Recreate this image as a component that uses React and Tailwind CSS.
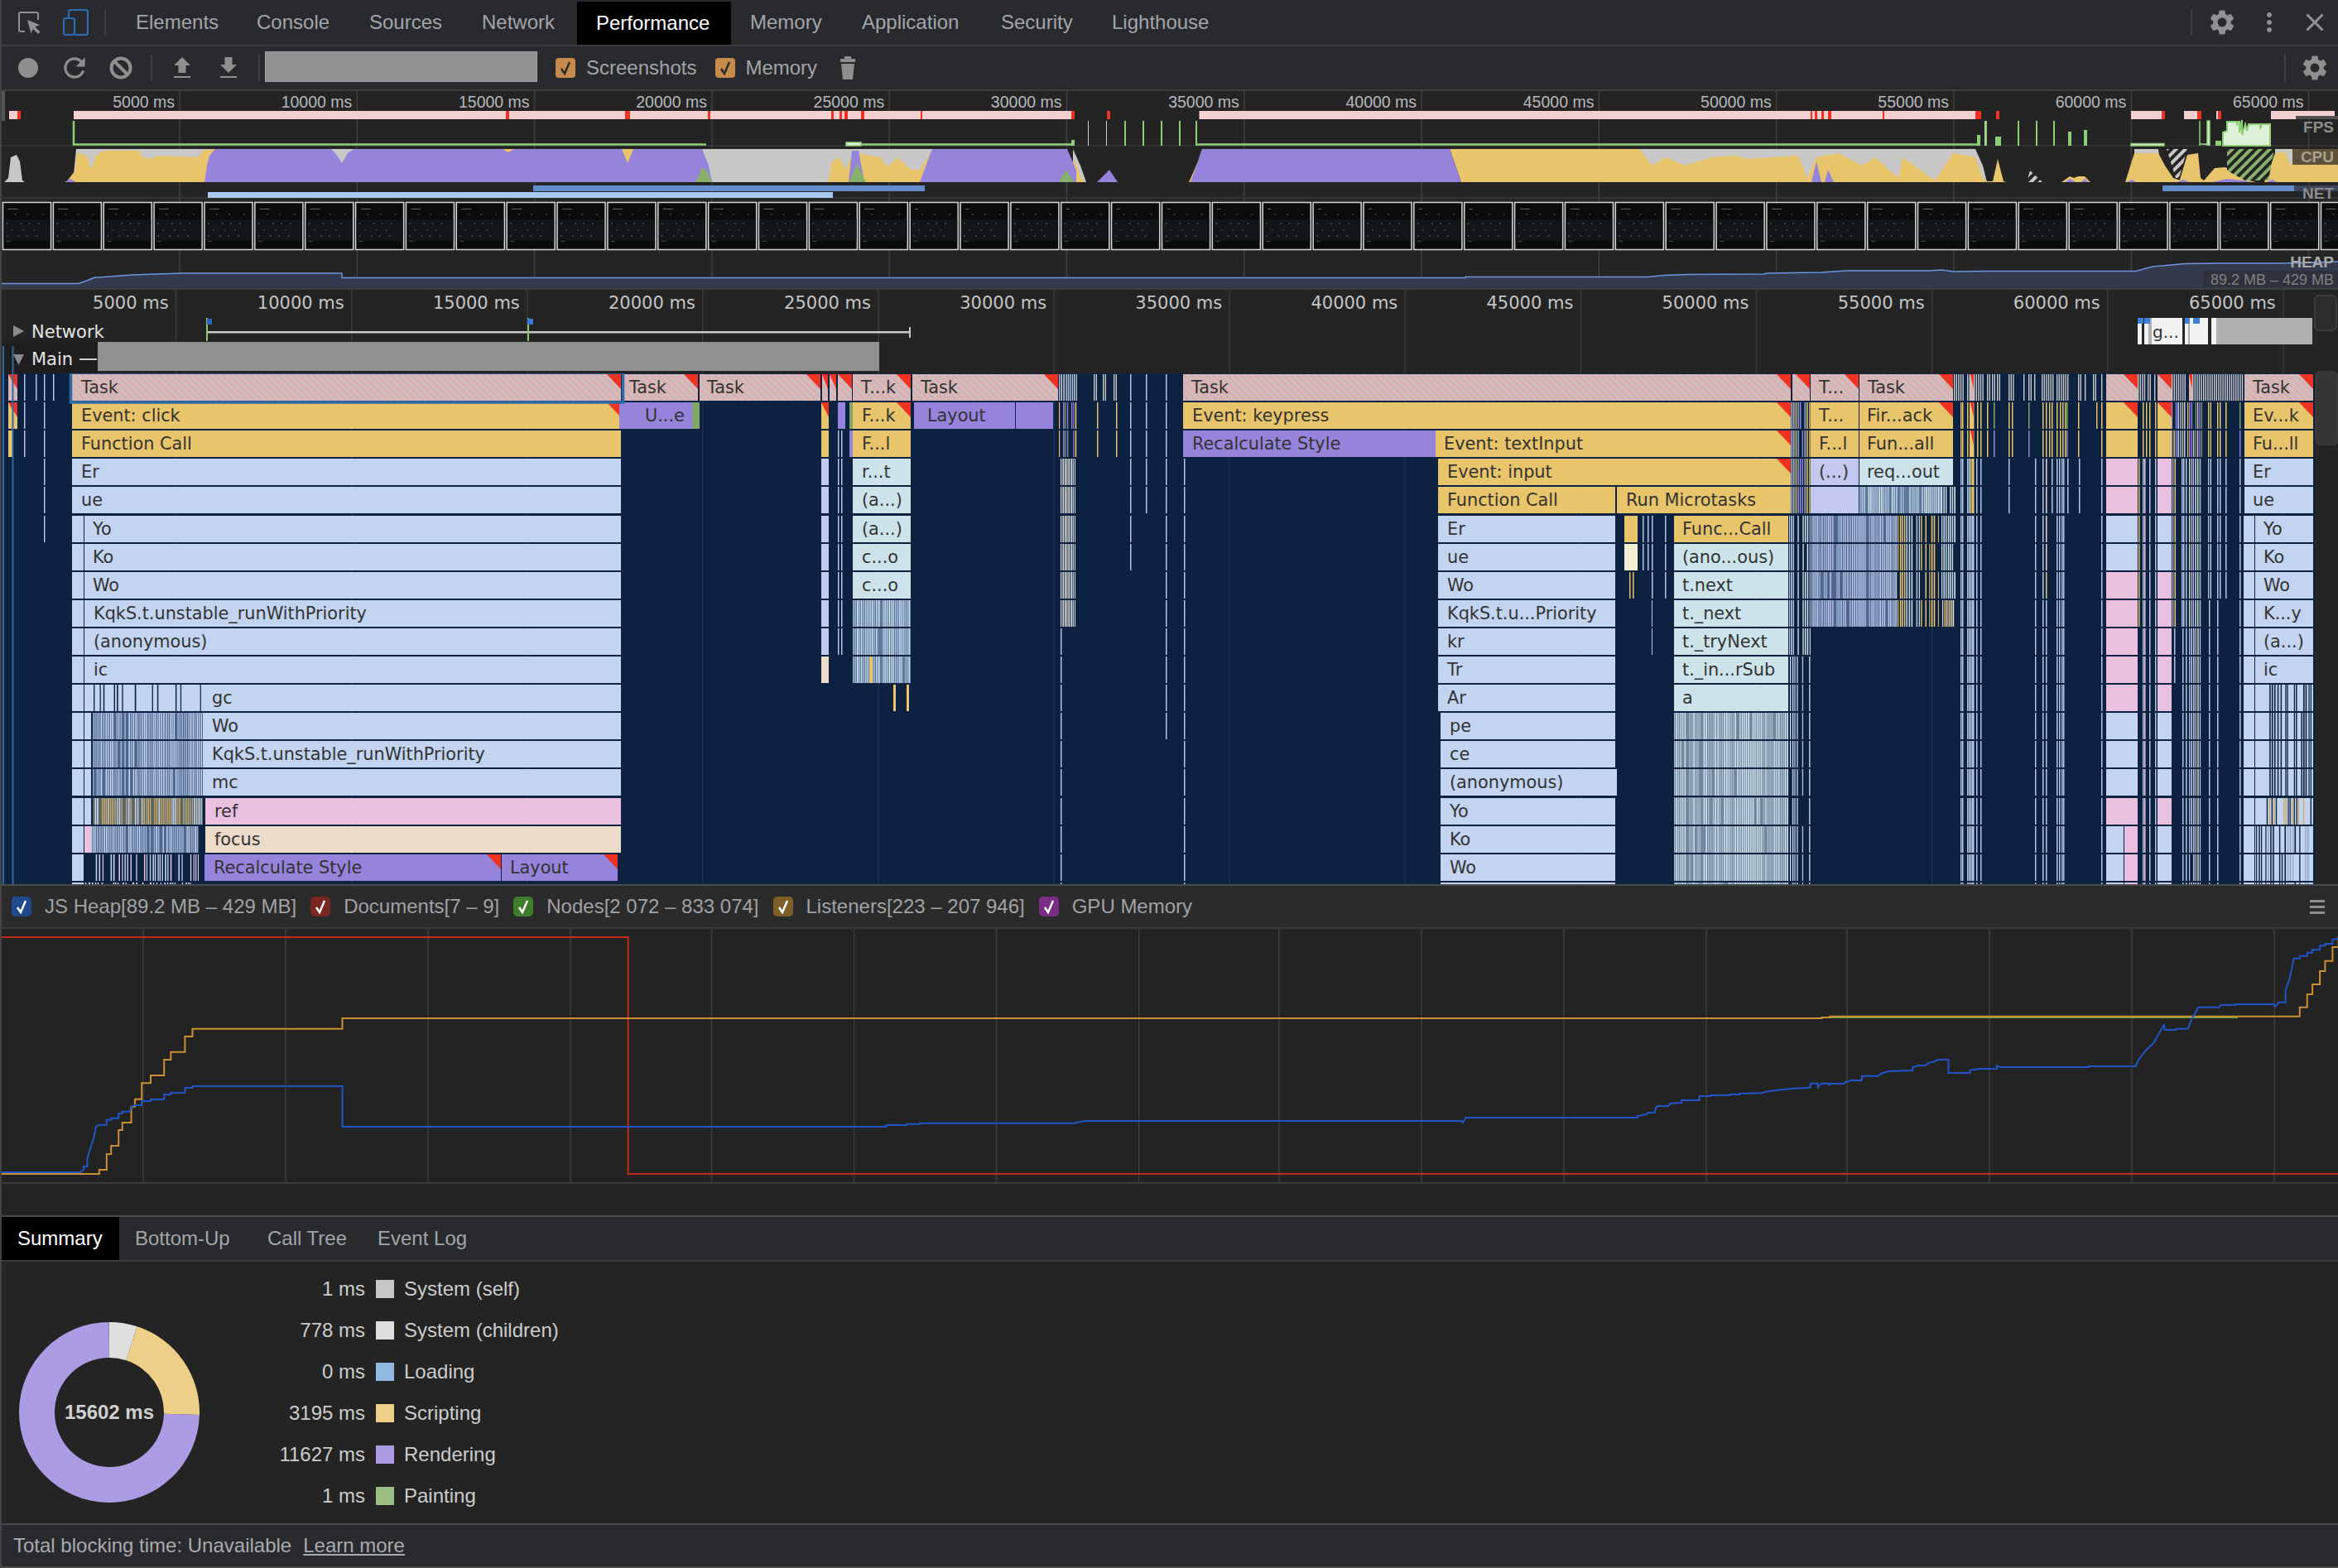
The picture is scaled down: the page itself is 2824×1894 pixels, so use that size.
import React from 'react';
import { MdSettings, MdMoreVert, MdClose, MdRefresh } from 'react-icons/md';

const NAVY = '#0d2140';
const BLUE = '#c2d4ef';
const TEAL = '#cce3ea';
const YEL = '#e8c46a';
const PUR = '#9683dc';
const PINK = '#e9c1df';
const BEIGE = '#ebdbc8';
const LAV = '#c3c8ef';
const GREY = '#c8c8c8';
const LINE = '#b4c6e4';
const GRN = '#7fa86a';

const rowY = (k) => 452 + Math.round(34.1 * k);

const rng = (seed) => {
  let s = seed;
  return () => {
    s = (s * 16807) % 2147483647;
    return (s - 1) / 2147483646;
  };
};

// thin vertical slices, the way the flame chart draws tiny events
function stripes(x0, x1, r0, r1, seed, colors, fill = 0.9, maxGap = 0.6) {
  const r = rng(seed);
  const out = [];
  let x = x0;
  while (x < x1) {
    const w = 1.2 + r() * 0.5;
    if (r() < fill) {
      const c = colors[Math.floor(r() * colors.length)];
      for (let k = r0; k <= r1; k++) {
        if (r() < 0.96) out.push({ x, w: Math.min(w, x1 - x), y: rowY(k), c });
      }
    }
    x += w + 0.8 + r() * maxGap;
  }
  return out;
}

// the same column of one pixel lines repeated through a span of rows
function cols(xs, r0, r1, c, w = 1.5) {
  const out = [];
  xs.forEach((x) => {
    for (let k = r0; k <= r1; k++) out.push({ x, w, y: rowY(k), c });
  });
  return out;
}

const tight = (ranges, r0, r1, c) => {
  const xs = [];
  ranges.forEach(([a, b]) => {
    for (let x = a; x < b; x += 2.6) xs.push(x);
  });
  return cols(xs, r0, r1, c, 1.4);
};

// muted colour under the densest groups of slices: x0, x1, first row, last row, colour
const backs = [
  [112, 245, 12, 14, '#4f678e'],
  [112, 245, 15, 15, '#5f6660'],
  [110, 240, 16, 16, '#4f678e'],
  [1030, 1100, 8, 10, '#5f7a98'],
  [2022, 2160, 12, 18, '#6f879f'],
  [2188, 2290, 5, 8, '#4f678e'],
  [2246, 2345, 4, 4, '#5f7a98'],
];

const slices = [
  // under Event: click
  ...stripes(102, 245, 11, 11, 11, [NAVY], 0.35, 4),
  ...stripes(112, 245, 12, 14, 12, ['#9fb4d4', BLUE], 0.95),
  ...stripes(112, 245, 15, 15, 13, ['#a9a38f', '#c9a86a', BLUE], 0.95),
  ...stripes(110, 240, 16, 16, 14, ['#9fb4d4', BLUE], 0.95),
  ...stripes(110, 240, 17, 17, 15, [BLUE, BLUE, PINK], 0.75, 2),
  ...stripes(88, 235, 18, 18, 16, [BLUE, '#ffffff'], 0.6, 3),
  ...stripes(1030, 1100, 8, 10, 17, [BLUE, TEAL, '#9fb4d4'], 0.95),
  ...cols([1012, 1016], 1, 9, LINE),

  // after the Layout task
  ...stripes(1279, 1301, 0, 0, 18, [GREY, LINE], 0.95),
  ...stripes(1279, 1301, 1, 2, 19, [GRN, YEL, PUR], 0.8),
  ...stripes(1281, 1299, 3, 8, 20, [TEAL, BEIGE, '#ffffff'], 0.95),
  ...cols([1281], 9, 18, LINE),
  ...tight([[1321, 1326], [1332, 1336], [1345, 1348]], 0, 0, GREY),
  ...cols([1325, 1348], 1, 2, YEL),
  ...cols([1365], 0, 6, LINE),
  ...cols([1384], 0, 4, LINE),
  ...cols([1408], 0, 12, LINE),
  ...cols([1430], 3, 18, LINE),
  ...cols([29], 0, 2, LINE),
  ...cols([43, 64], 0, 0, LINE),
  ...cols([53], 0, 5, LINE),

  // between the two function calls of keypress
  ...cols([1995, 2011], 5, 7, LINE),
  ...cols([1984, 1990], 5, 6, LINE),
  ...cols([1968, 1972], 7, 7, YEL),
  ...cols([1995], 8, 9, LINE, 1),
  ...stripes(2022, 2160, 12, 18, 22, [TEAL, '#a6bcc8', TEAL], 0.95),
  ...stripes(2161, 2187, 1, 4, 23, [YEL, PUR, LINE], 0.7, 1),
  ...stripes(2161, 2187, 5, 9, 24, [LINE, TEAL, YEL], 0.8, 1),
  ...stripes(2162, 2187, 10, 18, 25, [LINE, TEAL], 0.8, 1),
  ...stripes(2246, 2345, 4, 4, 26, [TEAL, LINE, LINE], 0.95),
  ...stripes(2188, 2290, 5, 8, 27, [LAV, LINE, '#9fb4d4'], 0.95),
  ...stripes(2290, 2342, 5, 8, 28, [LINE, TEAL, YEL, '#c9a86a'], 0.8, 1),
  ...stripes(2345, 2363, 4, 7, 29, [TEAL], 1),
  ...stripes(2346, 2361, 8, 8, 30, [YEL, BEIGE], 1),

  // sparse region after Fir...ack
  ...tight([[2360, 2372], [2376, 2379], [2384, 2395], [2400, 2403], [2406, 2409], [2412, 2415], [2426, 2433], [2444, 2445], [2450, 2453], [2457, 2458], [2466, 2479], [2484, 2499], [2510, 2513], [2518, 2519], [2528, 2533], [2538, 2539]], 0, 0, GREY),
  ...cols([2368, 2370, 2376, 2379, 2383, 2388, 2392, 2400, 2426, 2430, 2467, 2471, 2475, 2478, 2484, 2488, 2491, 2494, 2510, 2538], 1, 2, YEL),
  ...cols([2408, 2450, 2496], 1, 1, GRN),
  ...cols([2408, 2450, 2496], 2, 2, PUR),
  ...cols([2532], 1, 1, YEL),
  ...cols([2368, 2370, 2376, 2378, 2387, 2392, 2458, 2467, 2484, 2487, 2490, 2492, 2538], 3, 18, LINE),
  ...cols([2380, 2382, 2383], 3, 4, YEL),
  ...cols([2380, 2382, 2383], 5, 18, LINE),
  ...cols([2426, 2478, 2497, 2511], 3, 4, LINE),
  ...cols([2471], 3, 6, BEIGE),
  ...cols([2471], 7, 7, YEL),
  ...cols([2471], 8, 18, LINE),

  // columns next to the pink blocks
  ...tight([[2582, 2592], [2594, 2597], [2602, 2604]], 0, 0, GREY),
  ...cols([2588, 2592, 2596, 2603], 1, 2, YEL),
  ...cols([2583], 3, 8, YEL),
  ...cols([2588, 2596, 2603], 3, 18, LINE),
  ...cols([2590], 3, 18, PINK),
  ...tight([[2623, 2640], [2648, 2710]], 0, 0, GREY),
  ...stripes(2623, 2640, 1, 2, 31, [YEL, PUR, LINE], 0.95),
  ...stripes(2642, 2660, 1, 2, 32, [YEL, PINK, PUR, GRN], 0.95),
  ...tight([[2667, 2672]], 1, 2, YEL),
  ...cols([2678, 2681, 2688], 1, 2, YEL),
  ...cols([2705], 1, 1, GRN),
  ...cols([2705], 2, 2, PUR),
  ...stripes(2624, 2629, 3, 8, 33, [YEL, LINE], 1),
  ...cols([2635, 2637, 2640], 3, 8, LINE),
  ...stripes(2644, 2659, 3, 8, 34, [LINE, PINK, '#d7ecc4', LINE], 1),
  ...stripes(2667, 2672, 3, 7, 35, [LINE, BEIGE], 1),
  ...cols([2678, 2681], 3, 7, LINE),
  ...cols([2688], 3, 7, LINE),
  ...cols([2705], 3, 18, LINE),
  ...cols([2626], 9, 10, LINE),
  ...cols([2636, 2640], 9, 18, LINE),
  ...stripes(2644, 2659, 9, 18, 36, [LINE, PINK, '#d7ecc4', LINE], 1),
  ...cols([2668, 2678], 8, 18, LINE),
];

// row, x0, x1, colour, label, text offset, red corner
const blocks = [
  [0, 10, 21, 'url(#taskHatch)', '', 0, true],
  [1, 10, 21, YEL, '', 0, true],
  [2, 10, 16, YEL, '', 0, false],
  [0, 87, 750, 'url(#taskHatch)', 'Task', 11, true],
  [0, 751, 843, 'url(#taskHatch)', 'Task', 9, true],
  [0, 845, 991, 'url(#taskHatch)', 'Task', 9, true],
  [0, 993, 1000, 'url(#taskHatch)', '', 0, true],
  [0, 1002, 1010, 'url(#taskHatch)', '', 0, true],
  [0, 1012, 1029, 'url(#taskHatch)', '', 0, true],
  [0, 1030, 1100, 'url(#taskHatch)', 'T...k', 10, true],
  [0, 1102, 1278, 'url(#taskHatch)', 'Task', 10, true],
  [0, 1429, 2163, 'url(#taskHatch)', 'Task', 10, true],
  [0, 2165, 2186, 'url(#taskHatch)', '', 0, true],
  [0, 2187, 2245, 'url(#taskHatch)', 'T...', 10, true],
  [0, 2246, 2359, 'url(#taskHatch)', 'Task', 10, true],
  [0, 2380, 2384, 'url(#taskHatch)', '', 0, true],
  [0, 2544, 2582, 'url(#taskHatch)', '', 0, true],
  [0, 2606, 2623, 'url(#taskHatch)', '', 0, true],
  [0, 2644, 2648, 'url(#taskHatch)', '', 0, true],
  [0, 2711, 2794, 'url(#taskHatch)', 'Task', 10, true],

  [1, 87, 750, YEL, 'Event: click', 11, true],
  [1, 748, 836, PUR, 'U...e', 31, false],
  [1, 836, 845, GRN, '', 0, false],
  [1, 992, 1001, YEL, '', 0, true],
  [1, 1012, 1021, PUR, '', 0, false],
  [1, 1026, 1030, GRN, '', 0, false],
  [1, 1030, 1100, YEL, 'F...k', 11, true],
  [1, 1104, 1226, PUR, 'Layout', 16, false],
  [1, 1227, 1272, PUR, '', 0, false],
  [1, 1429, 2163, YEL, 'Event: keypress', 11, true],
  [1, 2187, 2245, YEL, 'T...', 10, false],
  [1, 2246, 2359, YEL, 'Fir...ack', 9, true],
  [1, 2380, 2384, YEL, '', 0, true],
  [1, 2544, 2582, YEL, '', 0, true],
  [1, 2606, 2623, YEL, '', 0, true],
  [1, 2711, 2794, YEL, 'Ev...k', 10, true],

  [2, 87, 750, YEL, 'Function Call', 11, false],
  [2, 992, 1001, YEL, '', 0, false],
  [2, 1026, 1030, PUR, '', 0, false],
  [2, 1030, 1100, YEL, 'F...l', 11, false],
  [2, 1429, 1734, PUR, 'Recalculate Style', 11, false],
  [2, 1734, 2163, YEL, 'Event: textInput', 10, true],
  [2, 2187, 2245, YEL, 'F...l', 10, false],
  [2, 2246, 2359, YEL, 'Fun...all', 9, false],
  [2, 2380, 2384, YEL, '', 0, true],
  [2, 2544, 2582, YEL, '', 0, false],
  [2, 2606, 2623, YEL, '', 0, false],
  [2, 2711, 2794, YEL, 'Fu...ll', 10, false],

  [3, 87, 750, BLUE, 'Er', 11, false],
  [3, 992, 1001, LAV, '', 0, false],
  [3, 1030, 1100, TEAL, 'r...t', 11, false],
  [3, 1737, 2163, YEL, 'Event: input', 11, true],
  [3, 2187, 2245, LAV, '(...)', 10, false],
  [3, 2246, 2359, TEAL, 'req...out', 9, false],
  [3, 2544, 2582, PINK, '', 0, false],
  [3, 2606, 2623, PINK, '', 0, false],
  [3, 2711, 2794, BLUE, 'Er', 10, false],

  [4, 87, 750, BLUE, 'ue', 11, false],
  [4, 992, 1001, LAV, '', 0, false],
  [4, 1030, 1100, TEAL, '(a...)', 11, false],
  [4, 1737, 1951, YEL, 'Function Call', 11, false],
  [4, 1953, 2163, YEL, 'Run Microtasks', 11, false],
  [4, 2187, 2245, LAV, '', 0, false],
  [4, 2544, 2582, PINK, '', 0, false],
  [4, 2606, 2623, PINK, '', 0, false],
  [4, 2711, 2794, BLUE, 'ue', 10, false],

  [5, 102, 750, BLUE, 'Yo', 10, false],
  [5, 992, 1001, LAV, '', 0, false],
  [5, 1030, 1100, TEAL, '(a...)', 11, false],
  [5, 1737, 1951, BLUE, 'Er', 11, false],
  [5, 1962, 1978, YEL, '', 0, false],
  [5, 2022, 2160, YEL, 'Func...Call', 10, false],
  [5, 2544, 2582, BLUE, '', 0, false],
  [5, 2606, 2623, BLUE, '', 0, false],
  [5, 2724, 2794, BLUE, 'Yo', 10, false],

  [6, 102, 750, BLUE, 'Ko', 10, false],
  [6, 992, 1001, LAV, '', 0, false],
  [6, 1030, 1100, TEAL, 'c...o', 11, false],
  [6, 1737, 1951, BLUE, 'ue', 11, false],
  [6, 1962, 1978, '#f2eed2', '', 0, false],
  [6, 2022, 2160, TEAL, '(ano...ous)', 10, false],
  [6, 2544, 2582, BLUE, '', 0, false],
  [6, 2606, 2623, BLUE, '', 0, false],
  [6, 2724, 2794, BLUE, 'Ko', 10, false],

  [7, 102, 750, BLUE, 'Wo', 10, false],
  [7, 992, 1001, LAV, '', 0, false],
  [7, 1030, 1100, TEAL, 'c...o', 11, false],
  [7, 1737, 1951, BLUE, 'Wo', 11, false],
  [7, 2022, 2160, TEAL, 't.next', 10, false],
  [7, 2544, 2582, PINK, '', 0, false],
  [7, 2606, 2623, PINK, '', 0, false],
  [7, 2724, 2794, BLUE, 'Wo', 10, false],

  [8, 102, 750, BLUE, 'KqkS.t.unstable_runWithPriority', 11, false],
  [8, 992, 1001, LAV, '', 0, false],
  [8, 1737, 1951, BLUE, 'KqkS.t.u...Priority', 11, false],
  [8, 2022, 2160, TEAL, 't._next', 10, false],
  [8, 2544, 2582, PINK, '', 0, false],
  [8, 2606, 2623, PINK, '', 0, false],
  [8, 2724, 2794, BLUE, 'K...y', 10, false],

  [9, 102, 750, BLUE, '(anonymous)', 11, false],
  [9, 992, 1001, LAV, '', 0, false],
  [9, 1737, 1951, BLUE, 'kr', 11, false],
  [9, 2022, 2160, TEAL, 't._tryNext', 10, false],
  [9, 2544, 2582, PINK, '', 0, false],
  [9, 2606, 2623, PINK, '', 0, false],
  [9, 2724, 2794, BLUE, '(a...)', 10, false],

  [10, 102, 750, BLUE, 'ic', 11, false],
  [10, 992, 1001, BEIGE, '', 0, false],
  [10, 1050, 1054, YEL, '', 0, false],
  [10, 1737, 1951, BLUE, 'Tr', 11, false],
  [10, 2022, 2160, TEAL, 't._in...rSub', 10, false],
  [10, 2544, 2582, PINK, '', 0, false],
  [10, 2606, 2623, PINK, '', 0, false],
  [10, 2724, 2794, BLUE, 'ic', 10, false],

  [11, 245, 750, BLUE, 'gc', 11, false],
  [11, 1079, 1082, YEL, '', 0, false],
  [11, 1095, 1098, YEL, '', 0, false],
  [11, 1737, 1951, BLUE, 'Ar', 11, false],
  [11, 2022, 2160, TEAL, 'a', 10, false],
  [11, 2544, 2582, PINK, '', 0, false],
  [11, 2606, 2623, PINK, '', 0, false],

  [12, 245, 750, BLUE, 'Wo', 11, false],
  [12, 1740, 1951, BLUE, 'pe', 11, false],
  [12, 2544, 2582, BLUE, '', 0, false],
  [12, 2606, 2623, BLUE, '', 0, false],

  [13, 245, 750, BLUE, 'KqkS.t.unstable_runWithPriority', 11, false],
  [13, 1740, 1951, BLUE, 'ce', 11, false],
  [13, 2544, 2582, BLUE, '', 0, false],
  [13, 2606, 2623, BLUE, '', 0, false],

  [14, 245, 750, BLUE, 'mc', 11, false],
  [14, 1740, 1953, BLUE, '(anonymous)', 11, false],
  [14, 2544, 2582, BLUE, '', 0, false],
  [14, 2606, 2623, BLUE, '', 0, false],

  [15, 248, 750, PINK, 'ref', 11, false],
  [15, 1740, 1951, BLUE, 'Yo', 11, false],
  [15, 2544, 2582, PINK, '', 0, false],
  [15, 2606, 2623, PINK, '', 0, false],

  [16, 248, 750, BEIGE, 'focus', 11, false],
  [16, 1740, 1951, BLUE, 'Ko', 11, false],
  [16, 2544, 2565, BLUE, '', 0, false],
  [16, 2566, 2582, PINK, '', 0, false],
  [16, 2606, 2623, BLUE, '', 0, false],

  [17, 247, 605, PUR, 'Recalculate Style', 11, true],
  [17, 606, 746, PUR, 'Layout', 10, true],
  [17, 1740, 1951, BLUE, 'Wo', 11, false],
  [17, 2544, 2565, BLUE, '', 0, false],
  [17, 2566, 2582, PINK, '', 0, false],
  [17, 2606, 2623, BLUE, '', 0, false],

  [18, 1740, 1951, BLUE, '', 0, false],
  [18, 2544, 2565, BLUE, '', 0, false],
  [18, 2566, 2582, PINK, '', 0, false],
  [18, 2606, 2623, BLUE, '', 0, false],
];

const leftColumn = [5, 6, 7, 8, 9, 10, 11, 12, 13, 14, 15, 16, 17, 18];

// blocks drawn first so that the tiny slices land on top of them
const tailRight = [11, 12, 13, 14, 15, 16, 17, 18];
const tailSlices = [
  ...stripes(2735, 2792, 11, 14, 37, [NAVY], 0.7, 1.5),
  ...stripes(2735, 2792, 15, 15, 38, [NAVY, '#c9a86a'], 0.8, 1),
  ...stripes(2725, 2792, 16, 18, 39, [NAVY, NAVY, '#8fa5c8'], 0.7, 1.5),
];

function FlameChart() {
  const gridX = Array.from({ length: 13 }, (_, i) => 212.6 + 212.1 * i);
  const labels = Array.from({ length: 13 }, (_, i) => `${(i + 1) * 5000} ms`);
  return (
    <svg viewBox="2 350 2822 718" className="block w-[2822px] h-[718px] font-['DejaVu_Sans',sans-serif]">
      <defs>
        <pattern id="taskHatch" width="6" height="6" patternUnits="userSpaceOnUse" patternTransform="rotate(135)">
          <rect width="6" height="6" fill="#dfadab" />
          <rect width="3" height="6" fill="#cbbfc3" />
        </pattern>
        <clipPath id="flameClip">
          <rect x="0" y="451" width="2824" height="617" />
        </clipPath>
      </defs>
      <rect x="2" y="350" width="2822" height="718" fill="#242424" />
      {gridX.map((x) => (
        <line key={x} x1={x} x2={x} y1="350" y2="451" stroke="#383838" strokeWidth="1.5" />
      ))}
      {labels.map((t, i) => (
        <text key={t} x={gridX[i] - 9} y="373" textAnchor="end" fontSize="21" fill="#c4c4c4">{t}</text>
      ))}

      {/* network row */}
      <path d="M16 393l13 7-13 7z" fill="#8a8a8a" />
      <text x="38" y="408" fontSize="21" fill="#e4e4e4">Network</text>
      <rect x="251" y="400" width="849" height="2.5" fill="#c8c8c8" />
      <rect x="1098" y="395" width="2" height="13" fill="#c8c8c8" />
      <rect x="249" y="384" width="2" height="28" fill="#8cc56e" />
      <rect x="637" y="384" width="2" height="28" fill="#8cc56e" />
      <rect x="250" y="385" width="6" height="7" fill="#2f63b8" />
      <rect x="637" y="385" width="7" height="7" fill="#3a78dc" />
      <rect x="2582" y="384" width="211" height="32" fill="#b0b0b0" />
      {[[2582, 5], [2590, 5], [2599, 37], [2639, 4], [2645, 22], [2671, 6]].map(([x, w]) => (
        <rect key={x} x={x} y="384" width={w} height="32" fill="#f2f2f2" />
      ))}
      <rect x="2587" y="384" width="3" height="32" fill="#242424" />
      <rect x="2636" y="384" width="3" height="32" fill="#242424" />
      <rect x="2667" y="384" width="4" height="32" fill="#242424" />
      {[[2582, 7], [2590, 7], [2639, 6], [2649, 8]].map(([x, w]) => (
        <rect key={x} x={x} y="384" width={w} height="7" fill="#3f7fdc" />
      ))}
      <text x="2600" y="408" fontSize="20" fill="#333">g...</text>

      {/* main row */}
      <rect x="2" y="413" width="116" height="38" fill="#1e1e1e" />
      <rect x="118" y="413" width="944" height="35" fill="#909090" />
      <path d="M16 428h13l-6.5 13z" fill="#8a8a8a" />
      <text x="38" y="441" fontSize="21" fill="#e4e4e4">Main</text>
      <rect x="96" y="433" width="21" height="2" fill="#d0d0d0" />

      <g clipPath="url(#flameClip)">
        <rect x="2" y="451" width="2822" height="617" fill={NAVY} />
        {gridX.map((x) => (
          <line key={x} x1={x} x2={x} y1="451" y2="1068" stroke="#1d3355" strokeWidth="1.5" />
        ))}
        {leftColumn.map((k) => (
          <g key={k}>
            <rect x="87" y={rowY(k)} width="14" height="32" fill={BLUE} />
            <rect x="2710" y={rowY(k)} width="13" height="32" fill={BLUE} />
          </g>
        ))}
        {tailRight.map((k) => (
          <rect key={k} x="2724" y={rowY(k)} width="70" height="32" fill={BLUE} />
        ))}
        {[11, 12, 13, 14, 15, 16].map((k) => (
          <rect key={k} x="102" y={rowY(k)} width="8" height="32" fill={k === 16 ? PINK : BLUE} />
        ))}
        <rect x="102" y={rowY(11)} width="143" height="32" fill={BLUE} />
        {backs.map(([x0, x1, r0, r1, c]) => (
          <rect key={`${x0}-${r0}`} x={x0} y={rowY(r0)} width={x1 - x0} height={rowY(r1) - rowY(r0) + 32} fill={c} />
        ))}
        {backs.map(([, , r0, r1], i) => {
          // keep the two pixel row gaps dark inside a muted span
          const [x0, x1] = backs[i];
          return Array.from({ length: r1 - r0 }, (_, n) => (
            <rect key={`${i}-${n}`} x={x0} y={rowY(r0 + n) + 32} width={x1 - x0} height="2" fill={NAVY} />
          ));
        })}
        {slices.map((s, i) => (
          <rect key={i} x={s.x} y={s.y} width={s.w} height="32" fill={s.c} />
        ))}
        {tailSlices.map((s, i) => (
          <rect key={i} x={s.x} y={s.y} width={s.w} height="32" fill={s.c} />
        ))}
        {blocks.map(([k, x0, x1, c, label, off, corner], i) => (
          <g key={i}>
            <rect x={x0} y={rowY(k)} width={x1 - x0} height="32" fill={c} />
            {corner && (
              <path d={`M${x1 - Math.min(17, x1 - x0)} ${rowY(k)}h${Math.min(17, x1 - x0)}v18z`} fill="#ee3322" />
            )}
            {label && (
              <text x={x0 + off} y={rowY(k) + 23} fontSize="20.8" fill="#333333">{label}</text>
            )}
          </g>
        ))}
        <rect x="85.5" y="450" width="667" height="36" fill="none" stroke="#2f6aa5" strokeWidth="3.5" />
        <rect x="2796" y="451" width="28" height="617" fill="#242424" />
      </g>

      <rect x="3" y="418" width="2" height="650" fill="#2f6aa5" />
      <rect x="14.5" y="418" width="2" height="650" fill="#2f6aa5" />

      {/* scrollbars */}
      <rect x="2796" y="357" width="26" height="42" rx="5" fill="#2c2c2c" stroke="#3c3c3c" strokeWidth="2" />
      <rect x="2797" y="449" width="27" height="88" rx="5" fill="#353535" stroke="#444" strokeWidth="1" />
    </svg>
  );
}

const greyShapes = [
  '5,220 10,215 13,190 20,187 24,195 27,218 30,220',
  '88,220 92,180 260,180 260,220',
  '400,180 428,180 428,220 400,220',
  '848,180 1127,180 1127,220 860,220',
  '1760,180 2386,180 2395,200 2400,220 1780,220',
  '2578,220 2578,180 2607,180 2612,220',
  '2748,220 2748,180 2769,180 2770,200 2760,220',
  '1296,180 1305,200 1312,220 1296,220',
];
const yellowShapes = [
  '80,220 90,207 93,185 100,186 106,190 109,202 112,202 115,188 122,184 128,181.7 167,181.7 172,190 182,192 190,188 213,189 240,190 245,181.7 260,180 248,220',
  '605,180 623,180 623,200 605,200',
  '749,180 767,180 767,205 749,205',
  '1000,220 1005,195 1014,190 1021,205 1028,190 1040,185 1046,187 1063,190 1072,202 1084,190 1100,205 1111,205 1127,180 1127,220',
  '1292,220 1298,192 1306,215 1310,220',
  '1436,220 1447,195 1452,180 1452,220',
  '1751,180 1980,180 1996,200 2012,190 2035,200 2067,190 2095,188 2111,192 2172,188 2183,215 2194,190 2221,185 2249,200 2265,190 2293,215 2298,190 2337,218 2359,185 2386,190 2395,215 2400,219 2407,219 2413,192 2420,219 2424,220 1765,220',
  '2490,220 2500,213 2505,215 2510,213 2518,213 2525,220',
  '2567,220 2578,185 2607,185 2615,200 2625,215 2640,220',
  '2632,220 2642,187 2655,185 2658,215 2662,218 2675,203 2688,202 2713,217 2725,220',
  '2735,220 2748,185 2760,183 2767,200 2773,192 2824,197 2824,220',
];
const purpleShapes = [
  '78,220 85,216 92,220',
  '247,220 250,200 253,188 260,180 400,180 405,185 413,197 420,185 428,180 607,180 614,184 621,180 751,180 758,197 765,180 848,180 856,200 860,220',
  '1025,220 1029,182 1037,182 1044,220',
  '1111,220 1125,182 1127,180 1289,180 1300,205 1300,220',
  '1325,220 1340,205 1350,220',
  '1438,220 1447,195 1452,180 1751,180 1765,220',
  '2188,220 2194,195 2200,220',
  '2204,220 2208,205 2215,220',
  '2495,220 2500,216 2507,220',
  '2514,220 2518,216 2523,220',
  '2568,220 2575,217 2580,220',
  '2630,220 2637,217 2645,220',
  '2672,220 2690,216 2710,218 2720,220',
  '2738,220 2745,217 2750,220',
];
const greenShapes = ['840,220 848,203 853,205 860,220', '1025,220 1035,198 1046,220', '1279,220 1287,205 1298,220'];

const pinkBars = [[11, 25], [89, 1295], [1448.5, 2392], [2574, 2615], [2638, 2659], [2677, 2683], [2743, 2820]];
const redBars = [[21, 25], [611, 615], [755, 761], [855, 858], [1004, 1007], [1014, 1017], [1020, 1024], [1040, 1044], [1112, 1114], [1294, 1298], [1337, 1341], [2187, 2189], [2192, 2195], [2200, 2203], [2208, 2212], [2274, 2276], [2386, 2393], [2411, 2415], [2611, 2615], [2654, 2659], [2679, 2683]];

const frames = Array.from({ length: 47 }, (_, i) => 3.5 + i * 60.87);

function Overview() {
  const gridX = Array.from({ length: 13 }, (_, i) => 217 + 214.3 * i);
  const heap = 'M2 342.5H95L102 340L115 335H120L160 332L220 330H413V335.5H1770V334.5H1990L2010 332.5L2040 331.5L2130 331L2135 330L2200 329L2230 327H2330L2345 326L2360 328L2400 327.5H2580L2600 322L2640 318.5L2680 318H2760L2824 316';
  return (
    <svg viewBox="2 110 2822 240" className="block w-[2822px] h-[240px] font-['Liberation_Sans',sans-serif]">
      <defs>
        <pattern id="hatchGrey" width="8" height="8" patternUnits="userSpaceOnUse" patternTransform="rotate(-45)">
          <rect width="8" height="8" fill="#242424" />
          <rect width="8" height="4" fill="#c8c8c8" />
        </pattern>
        <pattern id="hatchGreen" width="8" height="8" patternUnits="userSpaceOnUse" patternTransform="rotate(-45)">
          <rect width="8" height="8" fill="#242424" />
          <rect width="8" height="4" fill="#88b06b" />
        </pattern>
      </defs>
      <rect x="2" y="110" width="2822" height="240" fill="#242424" />
      <rect x="2" y="175" width="2822" height="2" fill="#333" />
      <rect x="2" y="238" width="2822" height="2" fill="#333" />
      {gridX.map((x) => (
        <line key={x} x1={x} x2={x} y1="110" y2="348" stroke="#404040" strokeWidth="1.5" />
      ))}
      {gridX.map((x, i) => (
        <text key={x} x={x - 6} y="130" textAnchor="end" fontSize="19.5" fill="#b4b8bc">{`${(i + 1) * 5000} ms`}</text>
      ))}
      <rect x="2" y="110" width="4" height="36" fill="#555" />

      {pinkBars.map(([a, b]) => (
        <rect key={a} x={a} y="134" width={b - a} height="10" fill="#f4d0d0" />
      ))}
      {redBars.map(([a, b]) => (
        <rect key={a} x={a} y="134" width={b - a} height="10" fill="#ee3322" />
      ))}

      {/* FPS */}
      <path d="M89 146V174.5H853M1040 174.5H1295M1446 174.5H2388" fill="none" stroke="#8ccf74" strokeWidth="2.5" />
      <rect x="1022" y="172" width="18" height="4" fill="#dff0d8" stroke="#8ccf74" strokeWidth="1.5" />
      <rect x="1294" y="169" width="4" height="7" fill="#8ccf74" />
      {[1358, 1380, 1402, 1424, 1444, 2437, 2459, 2480, 2398].map((x) => (
        <rect key={x} x={x} y="146" width="2" height="30" fill="#8ccf74" />
      ))}
      {[1314, 1336, 2397].map((x) => (
        <rect key={x} x={x} y="146" width="1" height="30" fill="#cfcfcf" />
      ))}
      <rect x="2388" y="163" width="4" height="13" fill="#8ccf74" />
      <rect x="2410" y="165" width="7" height="11" fill="#8ccf74" />
      <rect x="2498" y="159" width="4" height="17" fill="#8ccf74" />
      <rect x="2517" y="157" width="4" height="19" fill="#8ccf74" />
      <rect x="2574" y="173.5" width="40" height="2.5" fill="#dff0d8" stroke="#8ccf74" strokeWidth="1.5" />
      <path d="M2657 176V146M2657 174H2666V146H2669V176" fill="#dff0d8" stroke="#8ccf74" strokeWidth="1.5" />
      <rect x="2676" y="170" width="7" height="6" fill="#8ccf74" />
      <path d="M2685 176V160L2690 158V147H2702V152L2703 147H2705V160L2708 145V163L2712 150L2714 158L2716 150H2730V156L2732 150H2742V176Z" fill="#dff0d8" stroke="#8ccf74" strokeWidth="2" />

      {/* CPU */}
      {greyShapes.map((p) => <polygon key={p} points={p} fill="#c8c8c8" />)}
      {yellowShapes.map((p) => <polygon key={p} points={p} fill="#e8c46a" />)}
      {purpleShapes.map((p) => <polygon key={p} points={p} fill="#9683dc" />)}
      {greenShapes.map((p) => <polygon key={p} points={p} fill="#88b06b" />)}
      <polygon points="2448,220 2452,206 2467,220" fill="url(#hatchGrey)" />
      <polygon points="2617,180 2642,180 2632,215 2628,215" fill="url(#hatchGrey)" />
      <polygon points="2690,180 2747,180 2740,218 2712,218 2690,206" fill="url(#hatchGreen)" />

      {/* NET */}
      <rect x="644" y="224" width="473" height="7" fill="#638ccc" />
      <rect x="251" y="232" width="755" height="7" fill="#a8c8f0" />
      <rect x="2612" y="224" width="159" height="7" fill="#638ccc" />
      <rect x="2771" y="224" width="53" height="7" fill="#3d4658" />

      {/* screenshots */}
      {frames.map((x, i) => (
        <g key={x}>
          <rect x={x} y="244.5" width="58" height="57" fill="#0a0b0b" stroke="#d6d6d6" strokeWidth="1.5" />
          <rect x={x + 1} y="265" width="56" height="26" fill="#111619" />
          <rect x={x + 6} y="252" width={i > 17 && i < 30 ? 4 : 12} height="1" fill="#666" />
          {[14, 29, 47].map((d) => <rect key={d} x={x + d} y="258" width="2" height="2" fill="#333" />)}
          {[4, 21, 31, 42].map((d) => <rect key={d} x={x + d} y="269" width="2" height="2" fill="#3b4145" />)}
          {[10, 24, 36].map((d) => <rect key={d} x={x + d} y="277" width="2" height="2" fill="#30383c" />)}
          {[4, 18, 28, 40].map((d) => <rect key={d} x={x + d} y="284" width="2" height="2" fill="#3b4145" />)}
          <rect x={x + 4} y="291" width="5" height="1" fill="#444" />
        </g>
      ))}

      {/* heap */}
      <path d={`${heap}V348H2Z`} fill="#343a4e" />
      <path d={heap} fill="none" stroke="#6a95e0" strokeWidth="1.5" />
      <rect x="2" y="348" width="2822" height="2" fill="#3d3d3d" />

      {/* track labels */}
      <rect x="2773" y="140" width="51" height="4" fill="#55504f" />
      <rect x="2769" y="180" width="55" height="19" fill="#5e5138" />
      <g fontWeight="700" textAnchor="end" fill="#8c8c8c">
        <text x="2819" y="160" fontSize="19">FPS</text>
        <text x="2819" y="196" fontSize="19" fill="#a7a290">CPU</text>
        <text x="2819" y="240" fontSize="19">NET</text>
        <text x="2819" y="323" fontSize="19" fill="#a8a8a8">HEAP</text>
      </g>
      <rect x="2661" y="327" width="163" height="20" fill="#2f323c" />
      <text x="2819" y="344" textAnchor="end" fontSize="18" fill="#808080">89.2 MB – 429 MB</text>
    </svg>
  );
}

const toPts = (arr, ox = 0) => arr.map(([x, y]) => `${ox + x / 1.11},${1060 + y / 3}`).join(' ');

const orangeA = [[0, 1074], [133, 1074], [133, 1059], [143, 1059], [143, 1002], [149, 1002], [149, 972], [159, 972], [159, 915], [164, 915], [164, 888], [176, 888], [176, 830], [181, 830], [181, 803], [190, 803], [190, 745], [202, 745], [202, 717], [220, 717], [220, 660], [229, 660], [229, 632], [248, 632], [248, 576], [258, 576], [258, 548], [459, 548], [459, 510], [1568, 510]];
const orangeB = [[0, 510], [875, 510], [875, 507], [886, 507], [886, 503], [1516, 503], [1516, 470], [1526, 470], [1526, 423], [1533, 423], [1533, 387], [1543, 387], [1543, 339], [1550, 339], [1550, 302], [1560, 302], [1560, 252], [1568, 252], [1568, 215]];
const blueA = [[0, 1068], [108, 1068], [112, 1058], [112, 1047], [117, 1047], [117, 1020], [120, 990], [125, 950], [129, 902], [133, 896], [143, 896], [143, 878], [149, 878], [149, 872], [159, 872], [159, 855], [164, 855], [164, 848], [174, 848], [176, 830], [181, 825], [190, 825], [190, 810], [202, 810], [202, 804], [220, 804], [220, 786], [229, 786], [229, 780], [248, 780], [248, 762], [258, 762], [258, 756], [459, 756], [459, 903], [1188, 903], [1188, 897], [1216, 897], [1216, 893], [1234, 893], [1234, 890], [1443, 890], [1443, 887], [1451, 884], [1457, 882], [1568, 882]];
const blueB = [[0, 882], [392, 882], [394, 888], [398, 870], [628, 870], [628, 864], [640, 858], [642, 852], [651, 852], [653, 832], [656, 828], [670, 828], [672, 818], [687, 816], [687, 807], [711, 807], [711, 792], [726, 792], [726, 789], [752, 789], [752, 786], [765, 786], [765, 783], [795, 781], [800, 776], [815, 770], [835, 765], [855, 762], [860, 760], [860, 746], [870, 746], [870, 760], [875, 746], [885, 746], [885, 752], [888, 747], [905, 747], [907, 741], [915, 735], [929, 735], [929, 719], [950, 719], [957, 708], [965, 702], [997, 699], [997, 687], [1005, 681], [1015, 680], [1018, 672], [1027, 666], [1030, 660], [1045, 660], [1045, 708], [1074, 708], [1074, 698], [1087, 693], [1110, 693], [1110, 682], [1115, 687], [1233, 687], [1233, 684], [1296, 684], [1300, 660], [1310, 625], [1320, 600], [1330, 552], [1334, 535], [1335, 552], [1350, 552], [1350, 548], [1366, 548], [1370, 520], [1380, 470], [1408, 470], [1410, 462], [1430, 462], [1430, 459], [1481, 459], [1483, 468], [1488, 452], [1497, 452], [1497, 410], [1503, 360], [1508, 293], [1516, 293], [1516, 284], [1526, 284], [1526, 272], [1533, 272], [1533, 262], [1543, 262], [1543, 247], [1550, 247], [1550, 240], [1560, 240], [1560, 224], [1568, 222]];

function CounterChart() {
  const lines = [173, 345, 517, 689, 859.5, 1031.5, 1203.5, 1375.6, 1545, 1717, 1889, 2061, 2231, 2403, 2575, 2747];
  return (
    <svg viewBox="2 1122 2822 306" className="block w-[2822px] h-[306px]">
      <rect x="2" y="1122" width="2822" height="306" fill="#232323" />
      {lines.map((x) => (
        <line key={x} x1={x} x2={x} y1="1122" y2="1428" stroke="#3d3d3d" strokeWidth="1.5" />
      ))}
      <polyline points="2,1132 758.6,1132 758.6,1418 2824,1418" fill="none" stroke="#c5281e" strokeWidth="2" />
      <polyline points={toPts([[886, 507], [1433, 507]], 1412)} fill="none" stroke="#6aa84f" strokeWidth="2" />
      <polyline points={toPts(orangeA)} fill="none" stroke="#cc8f33" strokeWidth="2" />
      <polyline points={toPts(orangeB, 1412)} fill="none" stroke="#cc8f33" strokeWidth="2" />
      <polyline points={toPts(blueA)} fill="none" stroke="#2154c8" strokeWidth="2" />
      <polyline points={toPts(blueB, 1412)} fill="none" stroke="#2154c8" strokeWidth="2" />
    </svg>
  );
}

const arc = (a0, a1, R, r) => {
  const p = (rad, a) => {
    const t = ((a - 90) * Math.PI) / 180;
    return `${109 + rad * Math.cos(t)} ${109 + rad * Math.sin(t)}`;
  };
  const big = a1 - a0 > 180 ? 1 : 0;
  return `M${p(R, a0)}A${R} ${R} 0 ${big} 1 ${p(R, a1)}L${p(r, a1)}A${r} ${r} 0 ${big} 0 ${p(r, a0)}Z`;
};

function Donut() {
  return (
    <div className="relative w-[218px] h-[218px] ml-[21px] mt-[48px] shrink-0">
      <svg viewBox="0 0 218 218" className="w-[218px] h-[218px]">
        <path d={arc(0, 18, 109, 66)} fill="#dfdfdf" />
        <path d={arc(18, 91.6, 109, 66)} fill="#edcf87" />
        <path d={arc(91.6, 359.9, 109, 66)} fill="#ab9ce4" />
      </svg>
      <div className="absolute inset-0 flex items-center justify-center text-[24px] font-bold text-[#d0d0d0]">15602 ms</div>
    </div>
  );
}

const tabs = [
  ['Elements', 'w-[146px]'],
  ['Console', 'w-[136px]'],
  ['Sources', 'w-[136px]'],
  ['Network', 'w-[138px]'],
  ['Performance', 'w-[186px]'],
  ['Memory', 'w-[135px]'],
  ['Application', 'w-[168px]'],
  ['Security', 'w-[134px]'],
  ['Lighthouse', 'w-[170px]'],
];

function TabBar() {
  return (
    <div className="flex items-stretch h-[56px] border-b-2 border-[#3d3d3d] bg-[#292a2d] text-[24px] text-[#a2a5a9]">
      <div className="flex items-center w-[124px] shrink-0 pl-[20px] gap-[27px]">
        <svg width="27" height="27" viewBox="0 0 27 27" fill="none">
          <path d="M8 24H3C1.8 24 1 23.2 1 22V3C1 1.8 1.8 1 3 1H22C23.2 1 24 1.8 24 3V10" stroke="#8f9194" strokeWidth="2" />
          <path d="M11 10L26 16L20.5 18.5L26.5 24.5L24 27L18 21L15.5 26.5Z" fill="#8f9194" />
        </svg>
        <svg width="31" height="32" viewBox="0 0 31 32" fill="none">
          <path d="M7 10V3C7 2 8 1 9 1H28C29 1 30 2 30 3V29C30 30 29 31 28 31H14" stroke="#2a6db5" strokeWidth="2.2" />
          <rect x="1" y="11" width="13" height="20" rx="2" stroke="#2a6db5" strokeWidth="2.2" />
        </svg>
      </div>
      <span className="self-center w-0.5 h-8 bg-[#3d3e41] mr-[13px]" />
      {tabs.map(([name, width]) => (
        <div
          key={name}
          className={`flex items-center pl-[23px] ${width} ${name === 'Performance' ? 'bg-black text-white mt-0.5' : ''}`}
        >
          {name}
        </div>
      ))}
      <div className="flex-1" />
      <span className="self-center w-0.5 h-8 bg-[#3d3e41]" />
      <div className="flex items-center w-[176px] pl-[18px] text-[#8f9194]">
        <MdSettings size={36} />
        <span className="ml-[21px]"><MdMoreVert size={36} /></span>
        <span className="ml-[19px]"><MdClose size={36} /></span>
      </div>
    </div>
  );
}

function BlockIcon() {
  return (
    <svg width="28" height="28" viewBox="0 0 28 28" fill="none" stroke="#8f8f8f" strokeWidth="4">
      <circle cx="14" cy="14" r="11.5" />
      <path d="M6 6l16 16" />
    </svg>
  );
}

function ArrowIcon({ down }) {
  return (
    <svg width="22" height="26" viewBox="0 0 22 26" fill="#8f8f8f">
      {down ? <path d="M6.5 0H15.5V9H21L11 19L1 9H6.5Z" /> : <path d="M11 0L21 10H15.5V19H6.5V10H1Z" />}
      <rect x="1" y="23" width="20" height="2" />
    </svg>
  );
}

function TrashIcon() {
  return (
    <svg width="18" height="28" viewBox="0 0 18 28" fill="#8f8f8f">
      <rect x="5" y="0" width="8" height="5" rx="1" />
      <rect x="0" y="3" width="18" height="4" rx="1" />
      <path d="M1 9H17L15 28H3Z" />
    </svg>
  );
}

function Toolbar() {
  return (
    <div className="flex items-center h-[54px] border-b-2 border-[#3d3d3d] bg-[#292a2d] text-[24px] text-[#a2a5a9] pl-1">
      <span className="flex justify-center w-14"><span className="w-6 h-6 rounded-full bg-[#8f8f8f]" /></span>
      <span className="flex justify-center w-14 text-[#8f8f8f]"><MdRefresh size={38} /></span>
      <span className="flex justify-center w-14"><BlockIcon /></span>
      <span className="w-0.5 h-8 bg-[#3d3e41] ml-2" />
      <span className="flex justify-center w-14 ml-2"><ArrowIcon /></span>
      <span className="flex justify-center w-14"><ArrowIcon down /></span>
      <span className="w-0.5 h-8 bg-[#3d3e41] ml-2" />
      <div className="w-[329px] h-[37px] bg-[#909090] ml-[6px] mb-[4px] border border-[#a0a0a0]" />
      <span className="flex items-center justify-center w-6 h-6 rounded-[4px] bg-[#c68a4a] ml-[22px]"><Tick color="#2b2b2b" /></span>
      <span className="ml-[13px]">Screenshots</span>
      <span className="flex items-center justify-center w-6 h-6 rounded-[4px] bg-[#c68a4a] ml-[23px]"><Tick color="#2b2b2b" /></span>
      <span className="ml-3">Memory</span>
      <span className="ml-[28px]"><TrashIcon /></span>
      <div className="flex-1" />
      <span className="w-0.5 h-8 bg-[#3d3e41]" />
      <span className="ml-[17px] mr-[10px] text-[#8f8f8f]"><MdSettings size={36} /></span>
    </div>
  );
}

function Tick({ color = '#ffffff' }) {
  return (
    <svg width="16" height="18" viewBox="0 0 16 18" fill="none">
      <path d="M3 10l4 6 6-14" stroke={color} strokeWidth="2.5" />
    </svg>
  );
}

const counters = [
  ['JS Heap[89.2 MB – 429 MB]', 'bg-[#1f4a8e]'],
  ['Documents[7 – 9]', 'bg-[#7b2721]'],
  ['Nodes[2 072 – 833 074]', 'bg-[#3d7d2c]'],
  ['Listeners[223 – 207 946]', 'bg-[#7f5f27]'],
  ['GPU Memory', 'bg-[#7a2d85]'],
];

const summary = [
  ['1 ms', 'bg-[#c6c6c6]', 'System (self)'],
  ['778 ms', 'bg-[#dfdfdf]', 'System (children)'],
  ['0 ms', 'bg-[#93b7e3]', 'Loading'],
  ['3195 ms', 'bg-[#edcf87]', 'Scripting'],
  ['11627 ms', 'bg-[#ab9ce4]', 'Rendering'],
  ['1 ms', 'bg-[#9cbc85]', 'Painting'],
];

export default function App() {
  return (
    <div className="w-[2824px] h-[1894px] overflow-hidden flex flex-col border-l-2 border-[#444444] bg-[#242424] font-['Liberation_Sans',sans-serif]">
      <TabBar />
      <Toolbar />
      <Overview />
      <div className="border-b-2 border-[#4a4a4a]">
        <FlameChart />
      </div>

      <div className="flex items-center h-[52px] border-b-2 border-[#3a3a3a] bg-[#2b2b2b] pl-3 text-[24px] text-[#a0a2a5]">
        {counters.map(([label, bg]) => (
          <div key={label} className="flex items-center gap-4 mr-[17px]">
            <span className={`flex items-center justify-center w-6 h-6 rounded-[5px] ${bg}`}><Tick /></span>
            <span>{label}</span>
          </div>
        ))}
        <div className="flex-1" />
        <div className="flex flex-col gap-1 w-[18px] mr-[16px]">
          <span className="h-[3px] bg-[#8f8f8f]" />
          <span className="h-[3px] bg-[#8f8f8f]" />
          <span className="h-[3px] bg-[#8f8f8f]" />
        </div>
      </div>

      <div className="border-b-2 border-[#3a3a3a]">
        <CounterChart />
      </div>
      <div className="h-[40px] border-b-2 border-[#4a4a4a] bg-[#232323]" />

      <div className="flex items-stretch h-[54px] border-b-2 border-[#3d3d3d] bg-[#292a2d] text-[24px] text-[#a2a5a9]">
        <div className="flex items-center w-[142px] pl-[19px] bg-black text-white">Summary</div>
        <div className="flex items-center pl-[19px] w-[179px]">Bottom-Up</div>
        <div className="flex items-center w-[133px]">Call Tree</div>
        <div className="flex items-center">Event Log</div>
      </div>

      <div className="flex items-center h-[318px] border-b-2 border-[#4a4a4a] bg-[#242424] text-[24px] text-[#cccccc]">
        <Donut />
        <div className="flex flex-col">
          {summary.map(([value, swatch, label]) => (
            <div key={label} className="flex items-center h-[50px]">
              <span className="w-[200px] text-right">{value}</span>
              <span className={`w-[22px] h-[22px] ml-[13px] ${swatch}`} />
              <span className="ml-3">{label}</span>
            </div>
          ))}
        </div>
      </div>

      <div className="flex items-center h-[52px] border-b-2 border-[#4a4a4a] bg-[#292a2d] pl-[14px] text-[24px] text-[#a9abae]">
        <span>Total blocking time: Unavailable</span>
        <span className="ml-[14px] underline underline-offset-2">Learn more</span>
      </div>
    </div>
  );
}
